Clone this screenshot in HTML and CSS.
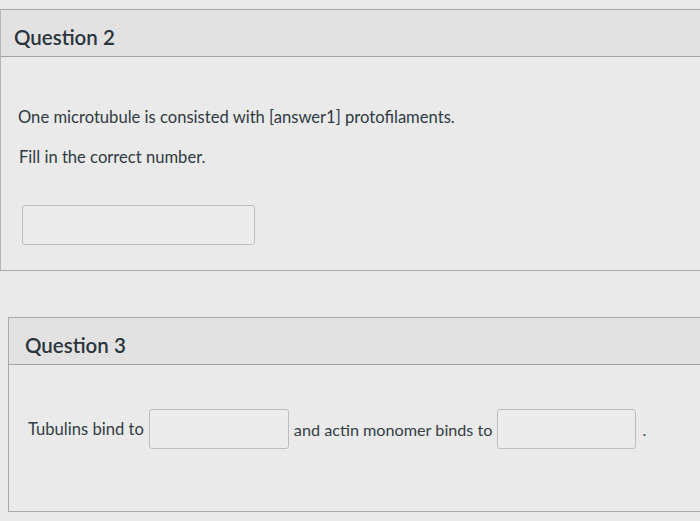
FILE: index.html
```html
<!DOCTYPE html>
<html>
<head>
<meta charset="utf-8">
<link rel="stylesheet" href="styles.css">
</head>
<body>
<div class="page">
  <section class="card card-q2">
    <header class="card-header"><h2 class="title">Question 2</h2></header>
    <div class="card-body q2-body">
      <p class="line line-1">One microtubule is consisted with [answer1] protofilaments.</p>
      <p class="line line-2">Fill in the correct number.</p>
      <div class="answer answer-wide"></div>
    </div>
  </section>
  <section class="card card-q3">
    <header class="card-header q3-header"><h2 class="title">Question 3</h2></header>
    <div class="card-body q3-body">
      <div class="sentence">
        <span class="word">Tubulins bind to</span>
        <span class="answer answer-a"></span>
        <span class="word word-b">and actin monomer binds to</span>
        <span class="answer answer-b"></span>
        <span class="dot">.</span>
      </div>
    </div>
  </section>
</div>
</body>
</html>
```

FILE: styles.css
```css
html, body {
  margin: 0;
  padding: 0;
}
body {
  background: #e9e9e9;
  font-family: Lato, "Open Sans", sans-serif;
  color: #2f3a42;
  width: 700px;
  height: 521px;
  overflow: hidden;
}
.page {
  display: flex;
  flex-direction: column;
  padding-top: 9px;
}
.card {
  border: 1px solid #a9a9a9;
  border-right: none;
  background: #ebebeb;
}
.card-q2 {
  margin-left: 0;
  width: 720px;
  border-left: 1px solid #b5b5b5;
}
.card-q3 {
  margin-top: 46px;
  margin-left: 8px;
  width: 712px;
}
.card-header {
  background: #e2e2e2;
  border-bottom: 1px solid #a4a4a4;
  height: 47px;
  box-sizing: border-box;
  display: flex;
  align-items: center;
  padding: 8px 0 0 13px;
}
.q3-header {
  padding-left: 16px;
}
.title {
  margin: 0;
  font-size: 20.5px;
  font-weight: 600;
  color: #2b353c;
}
.card-body {
  background: #eaeaea;
}
.q2-body {
  padding: 50px 0 0 17px;
  height: 213px;
  box-sizing: border-box;
  display: flex;
  flex-direction: column;
  align-items: flex-start;
}
.line {
  margin: 0;
  font-size: 16.6px;
  line-height: 20px;
}
.line-2 {
  margin-top: 20px;
  padding-left: 1px;
}
.answer {
  display: inline-block;
  flex-shrink: 0;
  box-sizing: border-box;
  border: 1px solid #bdbdbd;
  border-radius: 3px;
  background: #ececec;
}
.answer-wide {
  margin-top: 38px;
  margin-left: 4px;
  width: 233px;
  height: 40px;
}
.q3-body {
  height: 146px;
  box-sizing: border-box;
  padding: 44px 0 0 19px;
}
.sentence {
  display: flex;
  align-items: center;
  font-size: 16.6px;
  color: #333d44;
}
.word-b {
  font-size: 16.2px;
}
.answer-a {
  width: 140px;
  height: 40px;
  margin: 0 5px 0 5px;
}
.answer-b {
  width: 139px;
  height: 40px;
  margin: 0 6px 0 5px;
}
.dot {
  font-size: 16px;
}
```
